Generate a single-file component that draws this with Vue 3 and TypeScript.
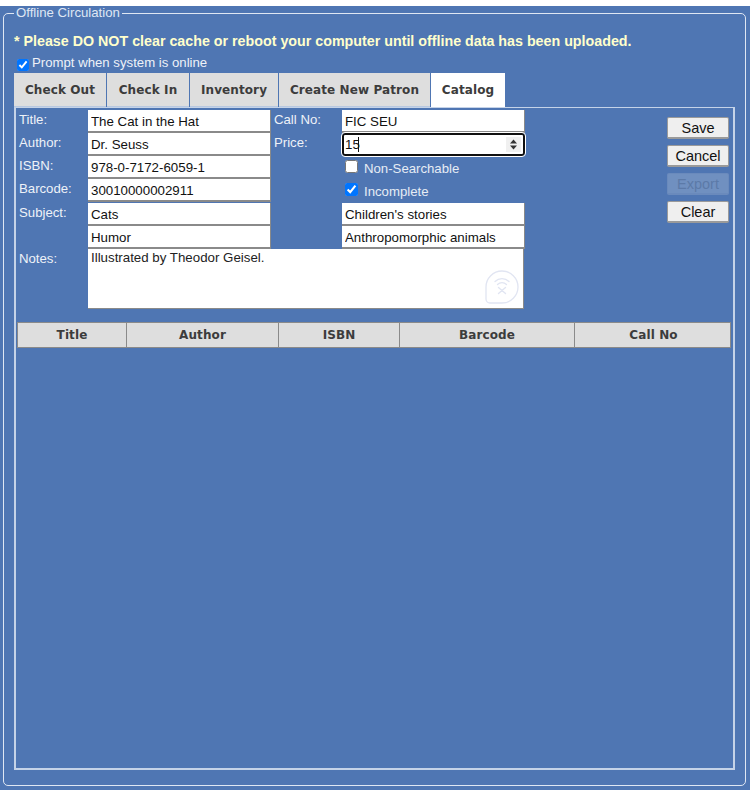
<script setup lang="ts">
const tabs: string[] = ['Check Out', 'Check In', 'Inventory', 'Create New Patron', 'Catalog']
const actions = [
  { label: 'Save', disabled: false },
  { label: 'Cancel', disabled: false },
  { label: 'Export', disabled: true },
  { label: 'Clear', disabled: false },
]
const columns = [
  { label: 'Title', width: 109 },
  { label: 'Author', width: 152 },
  { label: 'ISBN', width: 121 },
  { label: 'Barcode', width: 175 },
  { label: 'Call No', width: 157 },
]
</script>

<template>
  <div class="page">
    <fieldset class="frame">
      <legend class="legend">Offline Circulation</legend>
      <p class="notice">* Please DO NOT clear cache or reboot your computer until offline data has been uploaded.</p>
      <label class="prompt"><input type="checkbox" checked />Prompt when system is online</label>

      <div class="tabs">
        <div v-for="(tab, i) in tabs" :key="tab" class="tab" :class="{ active: i === 4 }">{{ tab }}</div>
      </div>

      <section class="panel">
        <div class="top">
          <div class="form">
            <span class="lbl">Title:</span>
            <input class="field" value="The Cat in the Hat" />
            <span class="lbl">Call No:</span>
            <input class="field" value="FIC SEU" />

            <span class="lbl">Author:</span>
            <input class="field" value="Dr. Seuss" />
            <span class="lbl">Price:</span>
            <div class="price-wrap">
              <input class="field price" type="number" value="15" autofocus />
              <span class="caret"></span>
              <svg class="spin" viewBox="0 0 15 15" fill="#333">
                <path d="M7.5 2.5 L11 6.5 H4 Z" />
                <path d="M7.5 12.5 L11 8.5 H4 Z" />
              </svg>
            </div>

            <span class="lbl">ISBN:</span>
            <input class="field" value="978-0-7172-6059-1" />
            <span></span>
            <label class="check"><input type="checkbox" />Non-Searchable</label>

            <span class="lbl">Barcode:</span>
            <input class="field" value="30010000002911" />
            <span></span>
            <label class="check"><input type="checkbox" checked />Incomplete</label>

            <span class="lbl">Subject:</span>
            <input class="field" value="Cats" />
            <span></span>
            <input class="field" value="Children's stories" />

            <span></span>
            <input class="field" value="Humor" />
            <span></span>
            <input class="field" value="Anthropomorphic animals" />

            <span class="lbl">Notes:</span>
            <div class="notes-wrap">
              <textarea class="notes">Illustrated by Theodor Geisel.</textarea>
              <svg class="badge" viewBox="0 0 34 34" fill="none" stroke="#e1e5f2" stroke-linecap="round">
                <path d="M5 33 H17 A16 16 0 1 0 1 17 V29 A4 4 0 0 0 5 33 Z" stroke-width="1.3" />
                <path d="M10 11.5 A10 10 0 0 1 24 11.5" stroke-width="1.3" />
                <path d="M12.5 14.5 A6.5 6.5 0 0 1 21.5 14.5" stroke-width="1.3" />
                <path d="M13.5 17.5 L20.5 23.5 M20.5 17.5 L13.5 23.5" stroke-width="1.4" />
              </svg>
            </div>
          </div>

          <div class="actions">
            <button v-for="a in actions" :key="a.label" class="btn" :disabled="a.disabled">{{ a.label }}</button>
          </div>
        </div>

        <div class="thead">
          <div
            v-for="c in columns"
            :key="c.label"
            class="th"
            :style="{ width: c.width + 'px' }"
          >{{ c.label }}</div>
        </div>
      </section>
    </fieldset>
  </div>
</template>

<style>
body { margin: 0; background: #fff; }
</style>

<style scoped>
.page {
  box-sizing: border-box;
  margin-top: 6px;
  height: 784px;
  padding: 0 4px 3px 3px;
  background: #4f76b3;
  font-family: "Liberation Sans", Arial, sans-serif;
  overflow: hidden;
}
.frame {
  box-sizing: border-box;
  height: 780px;
  margin: 0;
  padding: 0 10px 15px 10px;
  border: 1.5px solid #dfe7f3;
  border-radius: 5px;
}
.legend {
  margin-left: 0;
  padding: 0 2px;
  font-size: 13.2px;
  line-height: 14px;
  color: #dfe7f3;
}
.notice {
  margin: 12px 0 0;
  font-size: 14.28px;
  line-height: 18px;
  font-weight: 700;
  color: #ffffcc;
}
.prompt {
  display: flex;
  align-items: center;
  height: 16px;
  margin: 4px 0 0 3px;
  font-size: 13.2px;
  color: #eef2f8;
}
.prompt input {
  width: 12px;
  height: 12px;
  margin: 5px 3px 0 0;
  accent-color: #0075ff;
}
.tabs {
  display: grid;
  grid-template-columns: 92px 82px 88px 151px 74px;
  gap: 1px;
  height: 34px;
  margin-top: 3px;
}
.tab {
  display: flex;
  align-items: center;
  justify-content: center;
  box-sizing: border-box;
  border-bottom: 1px solid #b8c8e0;
  background: #dedede;
  font-family: "DejaVu Sans", Verdana, sans-serif;
  font-size: 12px;
  letter-spacing: 0.1px;
  font-weight: 700;
  color: #3c3c3c;
}
.tab.active {
  background: #fff;
  border-bottom: 0;
}
.panel {
  box-sizing: border-box;
  height: 663px;
  padding: 2px 2px 0 1px;
  border: 2px solid #c5d3e8;
  border-top-width: 1.5px;
}
.top {
  display: flex;
  justify-content: space-between;
  height: 212px;
}
.form {
  display: grid;
  grid-template-columns: 69px 183px 71px 183px;
  grid-template-rows: 23px 23px 23px 24px 23px 23px 60px;
  align-content: start;
  padding-left: 2px;
}
.lbl {
  font-size: 13.2px;
  line-height: 20px;
  color: #eef2f8;
}
.form > .lbl:nth-child(4n + 3) { padding-left: 3px; }
.field {
  box-sizing: border-box;
  width: 100%;
  height: 23px;
  margin: 0;
  padding: 1px 3px 0;
  border-style: solid;
  border-width: 0 1px 2px 0;
  border-color: #8a8a8a;
  outline: 0;
  border-radius: 0;
  background: #fff;
  font-family: inherit;
  font-size: 13.3px;
  color: #111;
}
.price-wrap {
  position: relative;
  height: 23px;
}
.price {
  border: 2px solid #101010;
  border-radius: 3px;
  outline: 1px solid #fff;
  padding: 0 1px;
  caret-color: transparent;
  appearance: textfield;
}
.price::-webkit-inner-spin-button,
.price::-webkit-outer-spin-button {
  appearance: none;
  margin: 0;
}
.caret {
  position: absolute;
  left: 16px;
  top: 4px;
  width: 1px;
  height: 15px;
  background: #111;
}
.spin {
  position: absolute;
  right: 4px;
  top: 4px;
  width: 15px;
  height: 15px;
  background: #f0f0f0;
}
.check {
  display: flex;
  align-items: center;
  height: 23px;
  padding-top: 2px;
  box-sizing: border-box;
  margin-left: 2px;
  font-size: 13.2px;
  color: #e6ecf5;
}
.check input {
  width: 13px;
  height: 13px;
  margin: 0 6px 4px 1px;
  accent-color: #0075ff;
}
.notes-wrap {
  position: relative;
  grid-column: 2 / 5;
  width: 436px;
  height: 60px;
}
.notes {
  display: block;
  box-sizing: border-box;
  width: 100%;
  height: 100%;
  margin: 0;
  padding: 1px 3px;
  border: 0;
  border-right: 1px solid #8a8a8a;
  border-bottom: 1px solid #8a8a8a;
  resize: none;
  outline: 0;
  background: #fff;
  font-family: inherit;
  font-size: 13.3px;
  color: #222;
}
.badge {
  position: absolute;
  right: 5px;
  bottom: 5px;
  width: 34px;
  height: 34px;
}
.actions {
  display: flex;
  flex-direction: column;
  gap: 6px;
  width: 62px;
  margin: 7px 2px 0 0;
}
.btn {
  box-sizing: border-box;
  height: 22px;
  padding: 0;
  border: 1px solid #9a9a9a;
  border-width: 1px 1px 2px 1px;
  border-radius: 2px;
  background: #efefef;
  font-family: inherit;
  font-size: 14.5px;
  color: #111;
}
.btn:disabled {
  background: #7090c0;
  border-color: #6a8abc;
  color: #5c7aa8;
}
.thead {
  display: flex;
  width: 714px;
  height: 26px;
  box-sizing: border-box;
  border: 1px solid #8a8a8a;
  background: #dedede;
}
.th {
  display: flex;
  align-items: center;
  justify-content: center;
  box-sizing: border-box;
  flex: none;
  border-right: 1px solid #8a8a8a;
  font-family: "DejaVu Sans", Verdana, sans-serif;
  font-size: 12px;
  letter-spacing: 0.1px;
  font-weight: 700;
  color: #3c3c3c;
}
.th:last-child { border-right: 0; }
</style>
